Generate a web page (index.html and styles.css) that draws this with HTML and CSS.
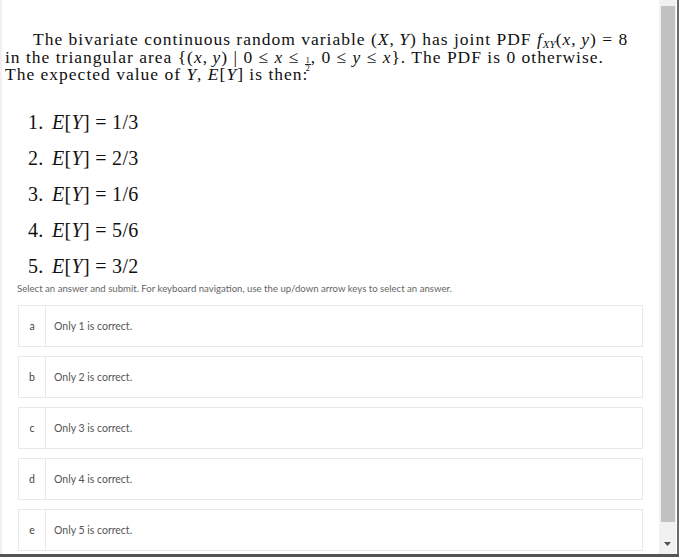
FILE: index.html
```
<!DOCTYPE html>
<html>
<head>
<meta charset="utf-8">
<link rel="stylesheet" href="styles.css">
</head>
<body>
<div class="frame">
  <div class="content">
    <div class="question">
      <span class="line first">The bivariate continuous random variable <span class="m">(<i>X</i>,&#8201;<i>Y</i>)</span> has joint PDF <span class="m"><i>f</i><sub><i>XY</i></sub>(<i>x</i>,&#8201;<i>y</i>) = 8</span></span>
      <span class="line">in the triangular area <span class="m">{(<i>x</i>,&#8201;<i>y</i>) | 0 ≤ <i>x</i> ≤ <span class="frac"><span>1</span><span>2</span></span>, 0 ≤ <i>y</i> ≤ <i>x</i>}</span>. The PDF is 0 otherwise.</span>
      <span class="line">The expected value of <i>Y</i>, <span class="m"><i>E</i>[<i>Y</i>]</span> is then:</span>
    </div>
    <ol class="stmts">
      <li><span class="num">1.</span><span class="m"><i>E</i>[<i>Y</i>] = 1/3</span></li>
      <li><span class="num">2.</span><span class="m"><i>E</i>[<i>Y</i>] = 2/3</span></li>
      <li><span class="num">3.</span><span class="m"><i>E</i>[<i>Y</i>] = 1/6</span></li>
      <li><span class="num">4.</span><span class="m"><i>E</i>[<i>Y</i>] = 5/6</span></li>
      <li><span class="num">5.</span><span class="m"><i>E</i>[<i>Y</i>] = 3/2</span></li>
    </ol>
    <div class="hint">Select an answer and submit. For keyboard navigation, use the up/down arrow keys to select an answer.</div>
    <div class="options">
      <div class="opt"><span class="letter">a</span><span class="otext">Only 1 is correct.</span></div>
      <div class="opt"><span class="letter">b</span><span class="otext">Only 2 is correct.</span></div>
      <div class="opt"><span class="letter">c</span><span class="otext">Only 3 is correct.</span></div>
      <div class="opt"><span class="letter">d</span><span class="otext">Only 4 is correct.</span></div>
      <div class="opt"><span class="letter">e</span><span class="otext">Only 5 is correct.</span></div>
    </div>
  </div>
  <div class="scrollbar">
    <div class="arrow-up"></div>
    <div class="thumb"></div>
    <div class="arrow-down"><svg width="7" height="4" viewBox="0 0 7 4"><path d="M0 0H7L3.5 4Z" fill="#505050"/></svg></div>
  </div>
</div>
<div class="bottom"></div>
</body>
</html>
```
FILE: styles.css
```
* { box-sizing: border-box; }
html, body { margin: 0; padding: 0; background: #fff; }
body { width: 679px; height: 557px; overflow: hidden; }
.frame {
  display: flex;
  height: 554px;
  border-right: 2px solid #6a6a6a;
  border-left: 2px solid #f0f0f0;
}
.content { flex: 1; padding: 0 0 0 3px; }
.question {
  margin: 31px 0 0 0;
  font-family: "Liberation Serif", serif;
  font-size: 17.5px;
  letter-spacing: 1px;
  color: #111;
}
.line { display: block; white-space: nowrap; height: 17.5px; line-height: 17.5px; }
.line.first { padding-left: 28px; }
.m i { font-style: italic; }
sub { font-size: 11px; line-height: 0; vertical-align: -3px; letter-spacing: 0; }
.frac {
  display: inline-flex; flex-direction: column; vertical-align: 0;
  font-size: 8px; line-height: 7px; text-align: center; height: 14px; letter-spacing: 0;
}
.frac span:first-child { border-bottom: 1px solid #222; padding: 0 1px; }
.stmts {
  list-style: none;
  margin: 20px 0 0 0;
  padding: 0 0 0 23px;
  font-family: "Liberation Serif", serif;
  font-size: 20px;
  letter-spacing: 0.3px;
  color: #111;
}
.stmts li { height: 36px; line-height: 36px; display: flex; }
.num { width: 24px; flex: none; }
.hint {
  margin: -1px 0 0 12px;
  font-family: "Lato", sans-serif;
  font-size: 9.6px;
  color: #666;
  line-height: 12px;
}
.options {
  display: flex; flex-direction: column; gap: 9px;
  margin: 10px 0 0 13px; width: 625px;
}
.opt {
  display: flex; height: 42px;
  border: 1px solid #e9e9e9;
  font-family: "Lato", sans-serif; font-size: 10.5px; color: #555;
  align-items: stretch;
}
.letter {
  width: 27px; border-right: 1px solid #e9e9e9;
  display: flex; align-items: center; justify-content: center;
  color: #444;
}
.otext { display: flex; align-items: center; padding-left: 8px; }
.scrollbar {
  width: 17px; background: #f1f1f1;
  display: flex; flex-direction: column; align-items: center;
  margin-right: 1px;
}
.arrow-up { height: 6px; width: 100%; }
.thumb { width: 14px; height: 516px; background: #c1c1c1; }
.arrow-down { flex: 1; display: flex; align-items: center; justify-content: center; padding-top: 12px; }
.bottom { height: 3px; background: #555; }
```
